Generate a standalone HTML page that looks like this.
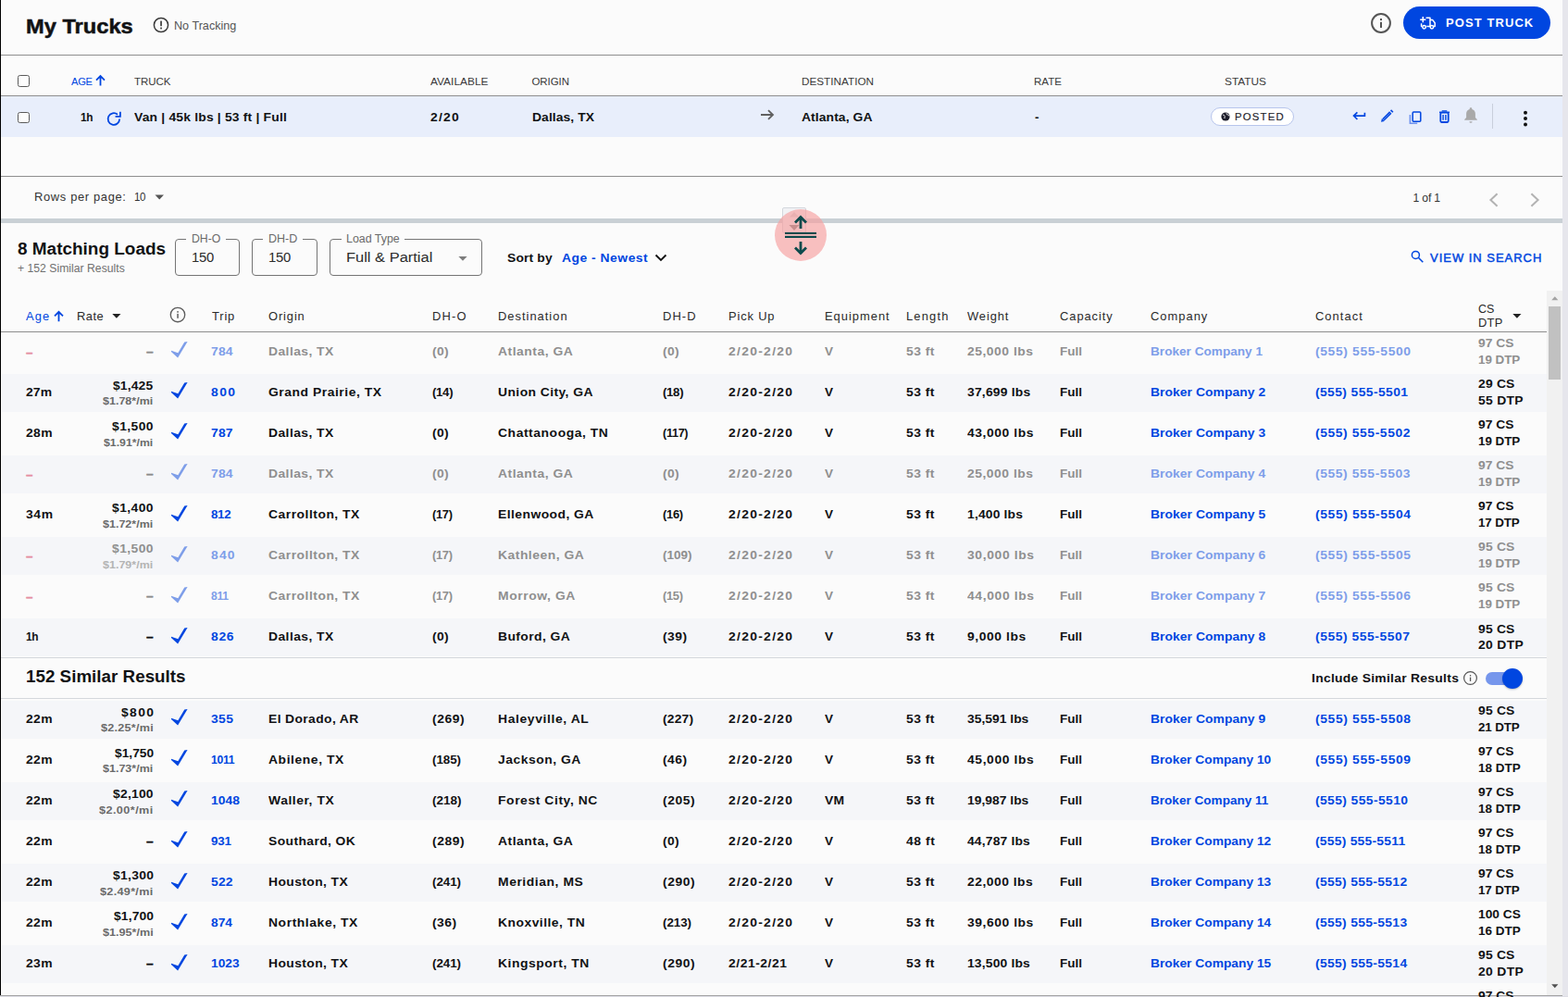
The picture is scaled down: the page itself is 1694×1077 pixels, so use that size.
<!DOCTYPE html>
<html lang="en"><head><meta charset="utf-8"><title>My Trucks</title><style>
html,body{margin:0;padding:0;}
body{width:1694px;height:1077px;overflow:hidden;background:#fbfbfb;font-family:"Liberation Sans",sans-serif;position:relative;}
.t{position:absolute;white-space:pre;transform-origin:0 50%;}
.b{position:absolute;}
svg{overflow:visible;}
</style></head><body>
<div class="b" style="left:0px;top:0px;width:1px;height:1075.5px;background:#000;"></div>
<div class="b" style="left:1688px;top:0px;width:6px;height:1077px;background:#e6e6ec;"></div>
<div class="b" style="left:0px;top:1074.8px;width:1688px;height:1.2px;background:#a3a3a3;"></div>
<div class="b" style="left:0px;top:1076px;width:1694px;height:1px;background:#dedee5;"></div>
<span class="t" style="left:27.9px;top:15px;font-size:22.5px;line-height:27px;color:#111214;transform:scaleX(1.052);font-weight:700;-webkit-text-stroke:0.5px #111214;">My Trucks</span>
<svg class="b" style="left:165px;top:18px;" width="18" height="18" viewBox="0 0 18 18"><circle cx="9" cy="9" r="7.6" fill="none" stroke="#3c3c3c" stroke-width="1.5"/><rect x="8.2" y="4.6" width="1.7" height="5.6" fill="#3c3c3c"/><rect x="8.2" y="11.6" width="1.7" height="1.8" fill="#3c3c3c"/></svg>
<span class="t" style="left:188.0px;top:20px;font-size:12.2px;line-height:16px;color:#555;transform:scaleX(1.036);">No Tracking</span>
<svg class="b" style="left:1479.8px;top:12.7px;" width="24" height="24" viewBox="0 0 24 24"><circle cx="12" cy="12" r="9.9" fill="none" stroke="#555" stroke-width="2"/><rect x="11" y="10.8" width="2" height="6.2" fill="#555"/><rect x="11" y="7" width="2" height="2.1" fill="#555"/></svg>
<div class="b" style="left:1516px;top:7px;width:159px;height:35px;background:#0046e0;border-radius:17.5px;"></div>
<svg class="b" style="left:1533px;top:17px;" width="19" height="16" viewBox="0 0 19 16"><g fill="none" stroke="#fff" stroke-width="1.5" stroke-linejoin="round" stroke-linecap="butt"><path d="M1.2 4.2h6.2M4.3 1.1v6.2"/><path d="M7.6 2.2h4.4v9.4H8.3"/><path d="M12 4.6h2.8l2.4 3.1v3.9h-1.3"/><path d="M2.6 8.2v3.4h0.8"/><circle cx="5.6" cy="12.2" r="1.7"/><circle cx="13.9" cy="12.2" r="1.7"/></g></svg>
<span class="t" style="left:1562.3px;top:17px;font-size:12.5px;line-height:16px;color:#fff;letter-spacing:1.04px;transform:scaleX(1.040);font-weight:700;">POST TRUCK</span>
<div class="b" style="left:1px;top:59px;width:1687px;height:1px;background:#8e8e8e;"></div>
<div class="b" style="left:19px;top:81.3px;width:13px;height:12.5px;box-sizing:border-box;border:1.6px solid #5a5a5a;border-radius:2.5px;background:#fdfdfd;"></div>
<span class="t" style="left:76.5px;top:81px;font-size:11.5px;line-height:14px;color:#0046e0;letter-spacing:-0.30px;transform:scaleX(0.972);">AGE</span>
<svg class="b" style="left:102px;top:80px;" width="13" height="14" viewBox="0 0 13 14"><path d="M6.5 12.6V2.2M2 6.6l4.5-4.5 4.5 4.5" fill="none" stroke="#0046e0" stroke-width="1.8"/></svg>
<span class="t" style="left:145.0px;top:81px;font-size:11.5px;line-height:14px;color:#3a3a3a;letter-spacing:-0.03px;">TRUCK</span>
<span class="t" style="left:465.0px;top:81px;font-size:11.5px;line-height:14px;color:#3a3a3a;transform:scaleX(1.036);">AVAILABLE</span>
<span class="t" style="left:574.5px;top:81px;font-size:11.5px;line-height:14px;color:#3a3a3a;letter-spacing:-0.08px;">ORIGIN</span>
<span class="t" style="left:866.4px;top:81px;font-size:11.5px;line-height:14px;color:#3a3a3a;transform:scaleX(1.020);">DESTINATION</span>
<span class="t" style="left:1117.0px;top:81px;font-size:11.5px;line-height:14px;color:#3a3a3a;transform:scaleX(1.005);">RATE</span>
<span class="t" style="left:1323.3px;top:81px;font-size:11.5px;line-height:14px;color:#3a3a3a;transform:scaleX(1.031);">STATUS</span>
<div class="b" style="left:1px;top:103px;width:1687px;height:1px;background:#8e8e8e;"></div>
<div class="b" style="left:1px;top:104px;width:1687px;height:43.5px;background:#e8eefb;"></div>
<div class="b" style="left:19px;top:120.5px;width:13px;height:12.5px;box-sizing:border-box;border:1.6px solid #5a5a5a;border-radius:2.5px;background:#fdfdfd;"></div>
<span class="t" style="left:86.5px;top:119px;font-size:12.3px;line-height:16px;color:#111214;letter-spacing:-0.30px;transform:scaleX(0.969);font-weight:700;">1h</span>
<svg class="b" style="left:114px;top:120px;" width="18" height="17" viewBox="0 0 18 17"><path d="M15.2 8.6a6.3 6.3 0 1 1-2.2-4.9" fill="none" stroke="#0046e0" stroke-width="1.8"/><path d="M10.6 5.9h5.3V0.8" fill="none" stroke="#0046e0" stroke-width="1.8"/></svg>
<span class="t" style="left:145.0px;top:119px;font-size:12.3px;line-height:16px;color:#111214;letter-spacing:0.16px;transform:scaleX(1.130);font-weight:700;">Van | 45k lbs | 53 ft | Full</span>
<span class="t" style="left:465.0px;top:119px;font-size:12.3px;line-height:16px;color:#111214;letter-spacing:1.11px;transform:scaleX(1.130);font-weight:700;">2/20</span>
<span class="t" style="left:574.5px;top:119px;font-size:12.3px;line-height:16px;color:#111214;letter-spacing:0.06px;transform:scaleX(1.130);font-weight:700;">Dallas, TX</span>
<svg class="b" style="left:821px;top:118px;" width="16" height="12" viewBox="0 0 16 12"><path d="M1 6h13M9 1.2l5 4.8-5 4.8" fill="none" stroke="#606060" stroke-width="1.8"/></svg>
<span class="t" style="left:866.4px;top:119px;font-size:12.3px;line-height:16px;color:#111214;letter-spacing:0.07px;transform:scaleX(1.130);font-weight:700;">Atlanta, GA</span>
<span class="t" style="left:1118.0px;top:119px;font-size:12.3px;line-height:16px;color:#111214;transform:scaleX(1.092);font-weight:700;">-</span>
<div class="b" style="left:1308px;top:116px;width:90px;height:20px;box-sizing:border-box;border:1px solid #b7c5ec;border-radius:10px;background:#fff;"></div>
<svg class="b" style="left:1318.5px;top:121px;" width="10" height="10" viewBox="0 0 10 10"><circle cx="5" cy="5" r="4.6" fill="#1d1d2b"/><path d="M2 3.2c1.2-.2 2 .4 2.2 1.4.2 1-.6 1.4-.2 2.4M6.2 1.2c-.4 1 .2 1.8 1.4 1.8.8 0 1.2.6 1.2 1.4" fill="none" stroke="#fff" stroke-width="0.9"/></svg>
<span class="t" style="left:1333.6px;top:119px;font-size:11px;line-height:14px;color:#1d1d2b;letter-spacing:1.17px;transform:scaleX(1.030);-webkit-text-stroke:0.15px #1d1d2b;">POSTED</span>
<svg class="b" style="left:1460px;top:119px;" width="17" height="12" viewBox="0 0 17 12"><path d="M14.4 2.7V6.1H2.6M6.4 2.3L2.5 6.1L6.4 10" fill="none" stroke="#0046e0" stroke-width="1.7"/></svg>
<svg class="b" style="left:1491px;top:117px;" width="16" height="16" viewBox="0 0 16 16"><path d="M3.4 12.4L11.3 4.5" stroke="#0046e0" stroke-width="3.3" fill="none"/><path d="M12.1 3.7L13.3 2.5" stroke="#0046e0" stroke-width="3.3" fill="none"/><path d="M1 14.8l.9-3.7 2.8 2.8z" fill="#0046e0"/><path d="M3.6 12.2L10.6 5.2" stroke="#6f93ee" stroke-width="0.9" fill="none"/></svg>
<svg class="b" style="left:1522px;top:120px;" width="14" height="15" viewBox="0 0 14 15"><rect x="4.2" y="1" width="8.6" height="10.2" rx="1" fill="none" stroke="#0046e0" stroke-width="1.5"/><path d="M1.4 4v9.2h7.8" fill="none" stroke="#6f93ee" stroke-width="1.6"/></svg>
<svg class="b" style="left:1554px;top:118.6px;" width="13" height="15" viewBox="0 0 13 15"><path d="M1 2.3h11" stroke="#0046e0" stroke-width="1.5"/><path d="M4.4 1.6V0.8h4.2v.8" fill="none" stroke="#0046e0" stroke-width="1.3"/><rect x="2.3" y="2.6" width="8.4" height="10.4" rx="1.2" fill="none" stroke="#0046e0" stroke-width="1.8"/><path d="M5.1 5v5.8M7.9 5v5.8" stroke="#0046e0" stroke-width="1.4"/></svg>
<svg class="b" style="left:1581px;top:115px;" width="16" height="19" viewBox="0 0 16 19"><path d="M8 1.2c.8 0 1.3.5 1.3 1.2v.5c2.3.6 3.6 2.6 3.6 5v4l1.9 2v.9H1.2v-.9l1.9-2v-4c0-2.4 1.3-4.4 3.6-5v-.5c0-.7.5-1.2 1.3-1.2zM6.4 16.2h3.2a1.6 1.6 0 0 1-3.2 0z" fill="#a9a9a9"/></svg>
<div class="b" style="left:1612px;top:112px;width:1px;height:27px;background:#c9cfdc;"></div>
<svg class="b" style="left:1645px;top:119px;" width="6" height="18" viewBox="0 0 6 18"><circle cx="3" cy="2.8" r="2" fill="#111"/><circle cx="3" cy="9.1" r="2" fill="#111"/><circle cx="3" cy="15.6" r="2" fill="#111"/></svg>
<div class="b" style="left:1px;top:189.5px;width:1687px;height:1px;background:#8e8e8e;"></div>
<span class="t" style="left:36.6px;top:205px;font-size:12.2px;line-height:16px;color:#333;letter-spacing:0.61px;transform:scaleX(1.060);">Rows per page:</span>
<span class="t" style="left:145.0px;top:205px;font-size:12.2px;line-height:16px;color:#333;letter-spacing:-0.30px;transform:scaleX(0.944);">10</span>
<svg class="b" style="left:167px;top:209.5px;" width="11" height="6" viewBox="0 0 11 6"><path d="M0.5 0.5h9.5L5.25 5.4z" fill="#555"/></svg>
<span class="t" style="left:1526.6px;top:206px;font-size:12.2px;line-height:16px;color:#333;letter-spacing:-0.20px;">1 of 1</span>
<svg class="b" style="left:1607.5px;top:207.5px;" width="12" height="16" viewBox="0 0 12 16"><path d="M9.6 1.2L2.4 8l7.2 6.8" fill="none" stroke="#b2b2b2" stroke-width="2"/></svg>
<svg class="b" style="left:1651.5px;top:207.5px;" width="12" height="16" viewBox="0 0 12 16"><path d="M2.4 1.2L9.6 8l-7.2 6.8" fill="none" stroke="#b2b2b2" stroke-width="2"/></svg>
<div class="b" style="left:1px;top:235.7px;width:1687px;height:5.1px;background:#c9d0d5;"></div>
<span class="t" style="left:19.3px;top:258px;font-size:17.5px;line-height:22px;color:#111214;transform:scaleX(1.083);font-weight:700;">8 Matching Loads</span>
<span class="t" style="left:19.3px;top:282px;font-size:12px;line-height:16px;color:#707070;transform:scaleX(1.018);">+ 152 Similar Results</span>
<div class="b" style="left:189px;top:258.3px;width:70px;height:39.9px;box-sizing:border-box;border:1px solid #757575;border-radius:4px;"></div>
<div class="b" style="left:201px;top:257.3px;width:43px;height:3px;background:#fbfbfb;"></div>
<span class="t" style="left:206.6px;top:250px;font-size:12px;line-height:16px;color:#6a6a6a;transform:scaleX(1.021);">DH-O</span>
<span class="t" style="left:206.6px;top:268px;font-size:15.5px;line-height:19px;color:#2c2c2c;letter-spacing:-0.30px;transform:scaleX(0.957);">150</span>
<div class="b" style="left:272px;top:258.3px;width:71px;height:39.9px;box-sizing:border-box;border:1px solid #757575;border-radius:4px;"></div>
<div class="b" style="left:284px;top:257.3px;width:43px;height:3px;background:#fbfbfb;"></div>
<span class="t" style="left:290.0px;top:250px;font-size:12px;line-height:16px;color:#6a6a6a;transform:scaleX(1.043);">DH-D</span>
<span class="t" style="left:290.0px;top:268px;font-size:15.5px;line-height:19px;color:#2c2c2c;letter-spacing:-0.30px;transform:scaleX(0.957);">150</span>
<div class="b" style="left:356px;top:258.3px;width:164.5px;height:39.9px;box-sizing:border-box;border:1px solid #757575;border-radius:4px;"></div>
<div class="b" style="left:368.5px;top:257.3px;width:68.5px;height:3px;background:#fbfbfb;"></div>
<span class="t" style="left:373.8px;top:250px;font-size:12px;line-height:16px;color:#6a6a6a;transform:scaleX(1.035);">Load Type</span>
<span class="t" style="left:373.8px;top:268px;font-size:15.5px;line-height:19px;color:#2c2c2c;transform:scaleX(1.062);">Full &amp; Partial</span>
<svg class="b" style="left:495px;top:276.5px;" width="10" height="5" viewBox="0 0 10 5"><path d="M0.4 0h9.2L5 4.8z" fill="#7d7d7d"/></svg>
<span class="t" style="left:548.4px;top:271px;font-size:12.3px;line-height:16px;color:#111214;letter-spacing:0.11px;transform:scaleX(1.130);font-weight:700;">Sort by</span>
<span class="t" style="left:606.6px;top:271px;font-size:12.3px;line-height:16px;color:#0046e0;letter-spacing:0.44px;transform:scaleX(1.130);font-weight:700;">Age - Newest</span>
<svg class="b" style="left:707px;top:273.5px;" width="14" height="9" viewBox="0 0 14 9"><path d="M1.5 1.5L7 7l5.5-5.5" fill="none" stroke="#111" stroke-width="1.8"/></svg>
<svg class="b" style="left:1524px;top:269.8px;" width="15" height="15" viewBox="0 0 15 15"><circle cx="5.4" cy="5.4" r="4" fill="none" stroke="#0046e0" stroke-width="1.5"/><path d="M8.3 8.3l5 5" stroke="#0046e0" stroke-width="1.6"/></svg>
<span class="t" style="left:1545.0px;top:271px;font-size:12.5px;line-height:16px;color:#0046e0;letter-spacing:0.94px;transform:scaleX(1.040);-webkit-text-stroke:0.45px #0046e0;">VIEW IN SEARCH</span>
<span class="t" style="left:28.0px;top:334px;font-size:12.2px;line-height:16px;color:#0046e0;letter-spacing:1.08px;transform:scaleX(1.060);">Age</span>
<svg class="b" style="left:56.5px;top:335px;" width="13" height="13" viewBox="0 0 13 13"><path d="M6.5 12.2V2M2 6.3L6.5 1.8 11 6.3" fill="none" stroke="#0046e0" stroke-width="1.8"/></svg>
<span class="t" style="left:83.0px;top:334px;font-size:12.2px;line-height:16px;color:#2a2a2a;letter-spacing:0.41px;transform:scaleX(1.060);">Rate</span>
<svg class="b" style="left:120.5px;top:339px;" width="10" height="5" viewBox="0 0 10 5"><path d="M0.3 0h9.2L4.9 4.7z" fill="#222"/></svg>
<svg class="b" style="left:183.2px;top:331px;" width="18" height="18" viewBox="0 0 18 18"><circle cx="9" cy="9" r="7.7" fill="none" stroke="#5c5c5c" stroke-width="1.35"/><rect x="8.3" y="7.9" width="1.5" height="4.9" fill="#5c5c5c"/><rect x="8.3" y="5.1" width="1.5" height="1.6" fill="#5c5c5c"/></svg>
<span class="t" style="left:228.6px;top:334px;font-size:12.2px;line-height:16px;color:#2a2a2a;letter-spacing:0.79px;transform:scaleX(1.060);">Trip</span>
<span class="t" style="left:289.6px;top:334px;font-size:12.2px;line-height:16px;color:#2a2a2a;letter-spacing:0.82px;transform:scaleX(1.060);">Origin</span>
<span class="t" style="left:466.6px;top:334px;font-size:12.2px;line-height:16px;color:#2a2a2a;letter-spacing:1.15px;transform:scaleX(1.060);">DH-O</span>
<span class="t" style="left:537.9px;top:334px;font-size:12.2px;line-height:16px;color:#2a2a2a;letter-spacing:0.94px;transform:scaleX(1.060);">Destination</span>
<span class="t" style="left:715.5px;top:334px;font-size:12.2px;line-height:16px;color:#2a2a2a;letter-spacing:1.03px;transform:scaleX(1.060);">DH-D</span>
<span class="t" style="left:786.8px;top:334px;font-size:12.2px;line-height:16px;color:#2a2a2a;letter-spacing:0.79px;transform:scaleX(1.060);">Pick Up</span>
<span class="t" style="left:891.4px;top:334px;font-size:12.2px;line-height:16px;color:#2a2a2a;letter-spacing:0.93px;transform:scaleX(1.060);">Equipment</span>
<span class="t" style="left:979.0px;top:334px;font-size:12.2px;line-height:16px;color:#2a2a2a;letter-spacing:1.10px;transform:scaleX(1.060);">Length</span>
<span class="t" style="left:1045.3px;top:334px;font-size:12.2px;line-height:16px;color:#2a2a2a;letter-spacing:0.83px;transform:scaleX(1.060);">Weight</span>
<span class="t" style="left:1144.5px;top:334px;font-size:12.2px;line-height:16px;color:#2a2a2a;letter-spacing:0.88px;transform:scaleX(1.060);">Capacity</span>
<span class="t" style="left:1243.1px;top:334px;font-size:12.2px;line-height:16px;color:#2a2a2a;letter-spacing:0.94px;transform:scaleX(1.060);">Company</span>
<span class="t" style="left:1420.5px;top:334px;font-size:12.2px;line-height:16px;color:#2a2a2a;letter-spacing:0.98px;transform:scaleX(1.060);">Contact</span>
<span class="t" style="left:1597.4px;top:326px;font-size:12.2px;line-height:16px;color:#2a2a2a;transform:scaleX(1.026);">CS</span>
<span class="t" style="left:1597.4px;top:341px;font-size:12.2px;line-height:16px;color:#2a2a2a;letter-spacing:0.25px;transform:scaleX(1.060);">DTP</span>
<svg class="b" style="left:1633.5px;top:339px;" width="10" height="5" viewBox="0 0 10 5"><path d="M0.3 0h9.2L4.9 4.7z" fill="#222"/></svg>
<div class="b" style="left:1px;top:358px;width:1670px;height:1px;background:#8e8e8e;"></div>
<span class="t" style="left:27.9px;top:373px;font-size:12.3px;line-height:16px;color:#e58fa3;transform:scaleX(1.084);font-weight:700;-webkit-text-stroke:0.4px #e58fa3;">–</span>
<span class="t" style="left:157.7px;top:372px;font-size:12.3px;line-height:16px;color:#8c8c8c;transform:scaleX(1.113);font-weight:700;-webkit-text-stroke:0.4px #8c8c8c;">–</span>
<svg class="b" style="left:184.5px;top:369.2px;" width="18" height="18" viewBox="0 0 18 18"><path d="M0 9.7L7.3 12.2L14.3 0.6L17.6 0L7.1 17.4L0 10.9Z" fill="#7e9ee9"/></svg>
<span class="t" style="left:227.8px;top:372px;font-size:12.3px;line-height:16px;color:#7e9ee9;letter-spacing:0.17px;transform:scaleX(1.130);font-weight:700;">784</span>
<span class="t" style="left:289.5px;top:372px;font-size:12.3px;line-height:16px;color:#8f8f8f;letter-spacing:0.38px;transform:scaleX(1.130);font-weight:700;">Dallas, TX</span>
<span class="t" style="left:466.6px;top:372px;font-size:12.3px;line-height:16px;color:#8f8f8f;letter-spacing:0.28px;transform:scaleX(1.130);font-weight:700;">(0)</span>
<span class="t" style="left:537.9px;top:372px;font-size:12.3px;line-height:16px;color:#8f8f8f;letter-spacing:0.45px;transform:scaleX(1.130);font-weight:700;">Atlanta, GA</span>
<span class="t" style="left:715.5px;top:372px;font-size:12.3px;line-height:16px;color:#8f8f8f;letter-spacing:0.28px;transform:scaleX(1.130);font-weight:700;">(0)</span>
<span class="t" style="left:786.8px;top:372px;font-size:12.3px;line-height:16px;color:#8f8f8f;letter-spacing:1.14px;transform:scaleX(1.130);font-weight:700;">2/20-2/20</span>
<span class="t" style="left:891.4px;top:372px;font-size:12.3px;line-height:16px;color:#8f8f8f;transform:scaleX(1.100);font-weight:700;">V</span>
<span class="t" style="left:979.0px;top:372px;font-size:12.3px;line-height:16px;color:#8f8f8f;letter-spacing:0.41px;transform:scaleX(1.130);font-weight:700;">53 ft</span>
<span class="t" style="left:1045.3px;top:372px;font-size:12.3px;line-height:16px;color:#8f8f8f;letter-spacing:0.45px;transform:scaleX(1.130);font-weight:700;">25,000 lbs</span>
<span class="t" style="left:1144.5px;top:372px;font-size:12.3px;line-height:16px;color:#8f8f8f;transform:scaleX(1.099);font-weight:700;">Full</span>
<span class="t" style="left:1243.1px;top:372px;font-size:12.3px;line-height:16px;color:#7e9ee9;transform:scaleX(1.107);font-weight:700;">Broker Company 1</span>
<span class="t" style="left:1420.5px;top:372px;font-size:12.3px;line-height:16px;color:#7e9ee9;letter-spacing:0.55px;transform:scaleX(1.130);font-weight:700;">(555) 555-5500</span>
<span class="t" style="left:1597.4px;top:363px;font-size:12.3px;line-height:16px;color:#8f8f8f;transform:scaleX(1.123);font-weight:700;">97 CS</span>
<span class="t" style="left:1597.4px;top:381px;font-size:12.3px;line-height:16px;color:#8f8f8f;letter-spacing:-0.03px;transform:scaleX(1.090);font-weight:700;">19 DTP</span>
<div class="b" style="left:2.4px;top:403.5px;width:1668.6px;height:41.1px;background:#f5f6f9;"></div>
<span class="t" style="left:27.6px;top:416px;font-size:12.3px;line-height:16px;color:#111214;letter-spacing:0.09px;transform:scaleX(1.130);font-weight:700;">27m</span>
<span class="t" style="left:122.4px;top:409px;font-size:12.3px;line-height:16px;color:#111214;letter-spacing:0.12px;transform:scaleX(1.130);font-weight:700;">$1,425</span>
<span class="t" style="left:111.4px;top:426px;font-size:11px;line-height:14px;color:#6a6a6a;transform:scaleX(1.137);font-weight:700;">$1.78*/mi</span>
<svg class="b" style="left:184.5px;top:413.3px;" width="18" height="18" viewBox="0 0 18 18"><path d="M0 9.7L7.3 12.2L14.3 0.6L17.6 0L7.1 17.4L0 10.9Z" fill="#0046e0"/></svg>
<span class="t" style="left:227.8px;top:416px;font-size:12.3px;line-height:16px;color:#0046e0;letter-spacing:1.28px;transform:scaleX(1.130);font-weight:700;">800</span>
<span class="t" style="left:289.5px;top:416px;font-size:12.3px;line-height:16px;color:#111214;letter-spacing:0.47px;transform:scaleX(1.130);font-weight:700;">Grand Prairie, TX</span>
<span class="t" style="left:466.6px;top:416px;font-size:12.3px;line-height:16px;color:#111214;letter-spacing:-0.30px;transform:scaleX(1.076);font-weight:700;">(14)</span>
<span class="t" style="left:537.9px;top:416px;font-size:12.3px;line-height:16px;color:#111214;letter-spacing:0.37px;transform:scaleX(1.130);font-weight:700;">Union City, GA</span>
<span class="t" style="left:715.5px;top:416px;font-size:12.3px;line-height:16px;color:#111214;letter-spacing:-0.30px;transform:scaleX(1.076);font-weight:700;">(18)</span>
<span class="t" style="left:786.8px;top:416px;font-size:12.3px;line-height:16px;color:#111214;letter-spacing:1.14px;transform:scaleX(1.130);font-weight:700;">2/20-2/20</span>
<span class="t" style="left:891.4px;top:416px;font-size:12.3px;line-height:16px;color:#111214;transform:scaleX(1.100);font-weight:700;">V</span>
<span class="t" style="left:979.0px;top:416px;font-size:12.3px;line-height:16px;color:#111214;letter-spacing:0.41px;transform:scaleX(1.130);font-weight:700;">53 ft</span>
<span class="t" style="left:1045.3px;top:416px;font-size:12.3px;line-height:16px;color:#111214;letter-spacing:0.18px;transform:scaleX(1.130);font-weight:700;">37,699 lbs</span>
<span class="t" style="left:1144.5px;top:416px;font-size:12.3px;line-height:16px;color:#111214;transform:scaleX(1.099);font-weight:700;">Full</span>
<span class="t" style="left:1243.1px;top:416px;font-size:12.3px;line-height:16px;color:#0046e0;letter-spacing:0.04px;transform:scaleX(1.130);font-weight:700;">Broker Company 2</span>
<span class="t" style="left:1420.5px;top:416px;font-size:12.3px;line-height:16px;color:#0046e0;letter-spacing:0.34px;transform:scaleX(1.130);font-weight:700;">(555) 555-5501</span>
<span class="t" style="left:1597.4px;top:407px;font-size:12.3px;line-height:16px;color:#111214;letter-spacing:0.17px;transform:scaleX(1.130);font-weight:700;">29 CS</span>
<span class="t" style="left:1597.4px;top:425px;font-size:12.3px;line-height:16px;color:#111214;letter-spacing:0.24px;transform:scaleX(1.130);font-weight:700;">55 DTP</span>
<span class="t" style="left:27.6px;top:460px;font-size:12.3px;line-height:16px;color:#111214;letter-spacing:0.35px;transform:scaleX(1.130);font-weight:700;">28m</span>
<span class="t" style="left:121.0px;top:453px;font-size:12.3px;line-height:16px;color:#111214;letter-spacing:0.37px;transform:scaleX(1.130);font-weight:700;">$1,500</span>
<span class="t" style="left:112.4px;top:471px;font-size:11px;line-height:14px;color:#6a6a6a;transform:scaleX(1.116);font-weight:700;">$1.91*/mi</span>
<svg class="b" style="left:184.5px;top:457.4px;" width="18" height="18" viewBox="0 0 18 18"><path d="M0 9.7L7.3 12.2L14.3 0.6L17.6 0L7.1 17.4L0 10.9Z" fill="#0046e0"/></svg>
<span class="t" style="left:227.8px;top:460px;font-size:12.3px;line-height:16px;color:#0046e0;letter-spacing:0.17px;transform:scaleX(1.130);font-weight:700;">787</span>
<span class="t" style="left:289.5px;top:460px;font-size:12.3px;line-height:16px;color:#111214;letter-spacing:0.38px;transform:scaleX(1.130);font-weight:700;">Dallas, TX</span>
<span class="t" style="left:466.6px;top:460px;font-size:12.3px;line-height:16px;color:#111214;letter-spacing:0.28px;transform:scaleX(1.130);font-weight:700;">(0)</span>
<span class="t" style="left:537.9px;top:460px;font-size:12.3px;line-height:16px;color:#111214;letter-spacing:0.49px;transform:scaleX(1.130);font-weight:700;">Chattanooga, TN</span>
<span class="t" style="left:715.5px;top:460px;font-size:12.3px;line-height:16px;color:#111214;letter-spacing:-0.30px;transform:scaleX(1.028);font-weight:700;">(117)</span>
<span class="t" style="left:786.8px;top:460px;font-size:12.3px;line-height:16px;color:#111214;letter-spacing:1.14px;transform:scaleX(1.130);font-weight:700;">2/20-2/20</span>
<span class="t" style="left:891.4px;top:460px;font-size:12.3px;line-height:16px;color:#111214;transform:scaleX(1.100);font-weight:700;">V</span>
<span class="t" style="left:979.0px;top:460px;font-size:12.3px;line-height:16px;color:#111214;letter-spacing:0.41px;transform:scaleX(1.130);font-weight:700;">53 ft</span>
<span class="t" style="left:1045.3px;top:460px;font-size:12.3px;line-height:16px;color:#111214;letter-spacing:0.50px;transform:scaleX(1.130);font-weight:700;">43,000 lbs</span>
<span class="t" style="left:1144.5px;top:460px;font-size:12.3px;line-height:16px;color:#111214;transform:scaleX(1.099);font-weight:700;">Full</span>
<span class="t" style="left:1243.1px;top:460px;font-size:12.3px;line-height:16px;color:#0046e0;letter-spacing:0.04px;transform:scaleX(1.130);font-weight:700;">Broker Company 3</span>
<span class="t" style="left:1420.5px;top:460px;font-size:12.3px;line-height:16px;color:#0046e0;letter-spacing:0.51px;transform:scaleX(1.130);font-weight:700;">(555) 555-5502</span>
<span class="t" style="left:1597.4px;top:451px;font-size:12.3px;line-height:16px;color:#111214;transform:scaleX(1.123);font-weight:700;">97 CS</span>
<span class="t" style="left:1597.4px;top:469px;font-size:12.3px;line-height:16px;color:#111214;letter-spacing:-0.03px;transform:scaleX(1.090);font-weight:700;">19 DTP</span>
<div class="b" style="left:2.4px;top:491.59999999999997px;width:1668.6px;height:41.1px;background:#f5f6f9;"></div>
<span class="t" style="left:27.9px;top:505px;font-size:12.3px;line-height:16px;color:#e58fa3;transform:scaleX(1.084);font-weight:700;-webkit-text-stroke:0.4px #e58fa3;">–</span>
<span class="t" style="left:157.7px;top:504px;font-size:12.3px;line-height:16px;color:#8c8c8c;transform:scaleX(1.113);font-weight:700;-webkit-text-stroke:0.4px #8c8c8c;">–</span>
<svg class="b" style="left:184.5px;top:501.4px;" width="18" height="18" viewBox="0 0 18 18"><path d="M0 9.7L7.3 12.2L14.3 0.6L17.6 0L7.1 17.4L0 10.9Z" fill="#7e9ee9"/></svg>
<span class="t" style="left:227.8px;top:504px;font-size:12.3px;line-height:16px;color:#7e9ee9;letter-spacing:0.17px;transform:scaleX(1.130);font-weight:700;">784</span>
<span class="t" style="left:289.5px;top:504px;font-size:12.3px;line-height:16px;color:#8f8f8f;letter-spacing:0.38px;transform:scaleX(1.130);font-weight:700;">Dallas, TX</span>
<span class="t" style="left:466.6px;top:504px;font-size:12.3px;line-height:16px;color:#8f8f8f;letter-spacing:0.28px;transform:scaleX(1.130);font-weight:700;">(0)</span>
<span class="t" style="left:537.9px;top:504px;font-size:12.3px;line-height:16px;color:#8f8f8f;letter-spacing:0.45px;transform:scaleX(1.130);font-weight:700;">Atlanta, GA</span>
<span class="t" style="left:715.5px;top:504px;font-size:12.3px;line-height:16px;color:#8f8f8f;letter-spacing:0.28px;transform:scaleX(1.130);font-weight:700;">(0)</span>
<span class="t" style="left:786.8px;top:504px;font-size:12.3px;line-height:16px;color:#8f8f8f;letter-spacing:1.14px;transform:scaleX(1.130);font-weight:700;">2/20-2/20</span>
<span class="t" style="left:891.4px;top:504px;font-size:12.3px;line-height:16px;color:#8f8f8f;transform:scaleX(1.100);font-weight:700;">V</span>
<span class="t" style="left:979.0px;top:504px;font-size:12.3px;line-height:16px;color:#8f8f8f;letter-spacing:0.41px;transform:scaleX(1.130);font-weight:700;">53 ft</span>
<span class="t" style="left:1045.3px;top:504px;font-size:12.3px;line-height:16px;color:#8f8f8f;letter-spacing:0.45px;transform:scaleX(1.130);font-weight:700;">25,000 lbs</span>
<span class="t" style="left:1144.5px;top:504px;font-size:12.3px;line-height:16px;color:#8f8f8f;transform:scaleX(1.099);font-weight:700;">Full</span>
<span class="t" style="left:1243.1px;top:504px;font-size:12.3px;line-height:16px;color:#7e9ee9;letter-spacing:0.04px;transform:scaleX(1.130);font-weight:700;">Broker Company 4</span>
<span class="t" style="left:1420.5px;top:504px;font-size:12.3px;line-height:16px;color:#7e9ee9;letter-spacing:0.51px;transform:scaleX(1.130);font-weight:700;">(555) 555-5503</span>
<span class="t" style="left:1597.4px;top:495px;font-size:12.3px;line-height:16px;color:#8f8f8f;transform:scaleX(1.123);font-weight:700;">97 CS</span>
<span class="t" style="left:1597.4px;top:513px;font-size:12.3px;line-height:16px;color:#8f8f8f;letter-spacing:-0.03px;transform:scaleX(1.090);font-weight:700;">19 DTP</span>
<span class="t" style="left:27.6px;top:548px;font-size:12.3px;line-height:16px;color:#111214;letter-spacing:0.53px;transform:scaleX(1.130);font-weight:700;">34m</span>
<span class="t" style="left:121.0px;top:541px;font-size:12.3px;line-height:16px;color:#111214;letter-spacing:0.37px;transform:scaleX(1.130);font-weight:700;">$1,400</span>
<span class="t" style="left:111.4px;top:559px;font-size:11px;line-height:14px;color:#6a6a6a;transform:scaleX(1.137);font-weight:700;">$1.72*/mi</span>
<svg class="b" style="left:184.5px;top:545.5px;" width="18" height="18" viewBox="0 0 18 18"><path d="M0 9.7L7.3 12.2L14.3 0.6L17.6 0L7.1 17.4L0 10.9Z" fill="#0046e0"/></svg>
<span class="t" style="left:227.8px;top:548px;font-size:12.3px;line-height:16px;color:#0046e0;letter-spacing:-0.30px;transform:scaleX(1.083);font-weight:700;">812</span>
<span class="t" style="left:289.5px;top:548px;font-size:12.3px;line-height:16px;color:#111214;letter-spacing:0.44px;transform:scaleX(1.130);font-weight:700;">Carrollton, TX</span>
<span class="t" style="left:466.6px;top:548px;font-size:12.3px;line-height:16px;color:#111214;letter-spacing:-0.30px;transform:scaleX(1.048);font-weight:700;">(17)</span>
<span class="t" style="left:537.9px;top:548px;font-size:12.3px;line-height:16px;color:#111214;letter-spacing:0.39px;transform:scaleX(1.130);font-weight:700;">Ellenwood, GA</span>
<span class="t" style="left:715.5px;top:548px;font-size:12.3px;line-height:16px;color:#111214;letter-spacing:-0.30px;transform:scaleX(1.053);font-weight:700;">(16)</span>
<span class="t" style="left:786.8px;top:548px;font-size:12.3px;line-height:16px;color:#111214;letter-spacing:1.14px;transform:scaleX(1.130);font-weight:700;">2/20-2/20</span>
<span class="t" style="left:891.4px;top:548px;font-size:12.3px;line-height:16px;color:#111214;transform:scaleX(1.100);font-weight:700;">V</span>
<span class="t" style="left:979.0px;top:548px;font-size:12.3px;line-height:16px;color:#111214;letter-spacing:0.41px;transform:scaleX(1.130);font-weight:700;">53 ft</span>
<span class="t" style="left:1045.3px;top:548px;font-size:12.3px;line-height:16px;color:#111214;letter-spacing:0.14px;transform:scaleX(1.130);font-weight:700;">1,400 lbs</span>
<span class="t" style="left:1144.5px;top:548px;font-size:12.3px;line-height:16px;color:#111214;transform:scaleX(1.099);font-weight:700;">Full</span>
<span class="t" style="left:1243.1px;top:548px;font-size:12.3px;line-height:16px;color:#0046e0;letter-spacing:0.04px;transform:scaleX(1.130);font-weight:700;">Broker Company 5</span>
<span class="t" style="left:1420.5px;top:548px;font-size:12.3px;line-height:16px;color:#0046e0;letter-spacing:0.54px;transform:scaleX(1.130);font-weight:700;">(555) 555-5504</span>
<span class="t" style="left:1597.4px;top:539px;font-size:12.3px;line-height:16px;color:#111214;transform:scaleX(1.123);font-weight:700;">97 CS</span>
<span class="t" style="left:1597.4px;top:557px;font-size:12.3px;line-height:16px;color:#111214;letter-spacing:-0.12px;transform:scaleX(1.090);font-weight:700;">17 DTP</span>
<div class="b" style="left:2.4px;top:579.8000000000001px;width:1668.6px;height:41.1px;background:#f5f6f9;"></div>
<span class="t" style="left:27.9px;top:593px;font-size:12.3px;line-height:16px;color:#e58fa3;transform:scaleX(1.084);font-weight:700;-webkit-text-stroke:0.4px #e58fa3;">–</span>
<span class="t" style="left:121.0px;top:585px;font-size:12.3px;line-height:16px;color:#8f8f8f;letter-spacing:0.37px;transform:scaleX(1.130);font-weight:700;">$1,500</span>
<span class="t" style="left:111.4px;top:603px;font-size:11px;line-height:14px;color:#b4b4b4;transform:scaleX(1.137);font-weight:700;">$1.79*/mi</span>
<svg class="b" style="left:184.5px;top:589.6px;" width="18" height="18" viewBox="0 0 18 18"><path d="M0 9.7L7.3 12.2L14.3 0.6L17.6 0L7.1 17.4L0 10.9Z" fill="#7e9ee9"/></svg>
<span class="t" style="left:227.8px;top:592px;font-size:12.3px;line-height:16px;color:#7e9ee9;letter-spacing:1.06px;transform:scaleX(1.130);font-weight:700;">840</span>
<span class="t" style="left:289.5px;top:592px;font-size:12.3px;line-height:16px;color:#8f8f8f;letter-spacing:0.44px;transform:scaleX(1.130);font-weight:700;">Carrollton, TX</span>
<span class="t" style="left:466.6px;top:592px;font-size:12.3px;line-height:16px;color:#8f8f8f;letter-spacing:-0.30px;transform:scaleX(1.048);font-weight:700;">(17)</span>
<span class="t" style="left:537.9px;top:592px;font-size:12.3px;line-height:16px;color:#8f8f8f;letter-spacing:0.44px;transform:scaleX(1.130);font-weight:700;">Kathleen, GA</span>
<span class="t" style="left:715.5px;top:592px;font-size:12.3px;line-height:16px;color:#8f8f8f;transform:scaleX(1.100);font-weight:700;">(109)</span>
<span class="t" style="left:786.8px;top:592px;font-size:12.3px;line-height:16px;color:#8f8f8f;letter-spacing:1.14px;transform:scaleX(1.130);font-weight:700;">2/20-2/20</span>
<span class="t" style="left:891.4px;top:592px;font-size:12.3px;line-height:16px;color:#8f8f8f;transform:scaleX(1.100);font-weight:700;">V</span>
<span class="t" style="left:979.0px;top:592px;font-size:12.3px;line-height:16px;color:#8f8f8f;letter-spacing:0.41px;transform:scaleX(1.130);font-weight:700;">53 ft</span>
<span class="t" style="left:1045.3px;top:592px;font-size:12.3px;line-height:16px;color:#8f8f8f;letter-spacing:0.55px;transform:scaleX(1.130);font-weight:700;">30,000 lbs</span>
<span class="t" style="left:1144.5px;top:592px;font-size:12.3px;line-height:16px;color:#8f8f8f;transform:scaleX(1.099);font-weight:700;">Full</span>
<span class="t" style="left:1243.1px;top:592px;font-size:12.3px;line-height:16px;color:#7e9ee9;letter-spacing:0.04px;transform:scaleX(1.130);font-weight:700;">Broker Company 6</span>
<span class="t" style="left:1420.5px;top:592px;font-size:12.3px;line-height:16px;color:#7e9ee9;letter-spacing:0.54px;transform:scaleX(1.130);font-weight:700;">(555) 555-5505</span>
<span class="t" style="left:1597.4px;top:583px;font-size:12.3px;line-height:16px;color:#8f8f8f;letter-spacing:0.17px;transform:scaleX(1.130);font-weight:700;">95 CS</span>
<span class="t" style="left:1597.4px;top:601px;font-size:12.3px;line-height:16px;color:#8f8f8f;letter-spacing:-0.03px;transform:scaleX(1.090);font-weight:700;">19 DTP</span>
<span class="t" style="left:27.9px;top:637px;font-size:12.3px;line-height:16px;color:#e58fa3;transform:scaleX(1.084);font-weight:700;-webkit-text-stroke:0.4px #e58fa3;">–</span>
<span class="t" style="left:157.7px;top:636px;font-size:12.3px;line-height:16px;color:#8c8c8c;transform:scaleX(1.113);font-weight:700;-webkit-text-stroke:0.4px #8c8c8c;">–</span>
<svg class="b" style="left:184.5px;top:633.6px;" width="18" height="18" viewBox="0 0 18 18"><path d="M0 9.7L7.3 12.2L14.3 0.6L17.6 0L7.1 17.4L0 10.9Z" fill="#7e9ee9"/></svg>
<span class="t" style="left:227.8px;top:636px;font-size:12.3px;line-height:16px;color:#7e9ee9;letter-spacing:-0.30px;transform:scaleX(0.986);font-weight:700;">811</span>
<span class="t" style="left:289.5px;top:636px;font-size:12.3px;line-height:16px;color:#8f8f8f;letter-spacing:0.44px;transform:scaleX(1.130);font-weight:700;">Carrollton, TX</span>
<span class="t" style="left:466.6px;top:636px;font-size:12.3px;line-height:16px;color:#8f8f8f;letter-spacing:-0.30px;transform:scaleX(1.048);font-weight:700;">(17)</span>
<span class="t" style="left:537.9px;top:636px;font-size:12.3px;line-height:16px;color:#8f8f8f;letter-spacing:0.50px;transform:scaleX(1.130);font-weight:700;">Morrow, GA</span>
<span class="t" style="left:715.5px;top:636px;font-size:12.3px;line-height:16px;color:#8f8f8f;letter-spacing:-0.30px;transform:scaleX(1.048);font-weight:700;">(15)</span>
<span class="t" style="left:786.8px;top:636px;font-size:12.3px;line-height:16px;color:#8f8f8f;letter-spacing:1.14px;transform:scaleX(1.130);font-weight:700;">2/20-2/20</span>
<span class="t" style="left:891.4px;top:636px;font-size:12.3px;line-height:16px;color:#8f8f8f;transform:scaleX(1.100);font-weight:700;">V</span>
<span class="t" style="left:979.0px;top:636px;font-size:12.3px;line-height:16px;color:#8f8f8f;letter-spacing:0.41px;transform:scaleX(1.130);font-weight:700;">53 ft</span>
<span class="t" style="left:1045.3px;top:636px;font-size:12.3px;line-height:16px;color:#8f8f8f;letter-spacing:0.55px;transform:scaleX(1.130);font-weight:700;">44,000 lbs</span>
<span class="t" style="left:1144.5px;top:636px;font-size:12.3px;line-height:16px;color:#8f8f8f;transform:scaleX(1.099);font-weight:700;">Full</span>
<span class="t" style="left:1243.1px;top:636px;font-size:12.3px;line-height:16px;color:#7e9ee9;letter-spacing:0.04px;transform:scaleX(1.130);font-weight:700;">Broker Company 7</span>
<span class="t" style="left:1420.5px;top:636px;font-size:12.3px;line-height:16px;color:#7e9ee9;letter-spacing:0.54px;transform:scaleX(1.130);font-weight:700;">(555) 555-5506</span>
<span class="t" style="left:1597.4px;top:627px;font-size:12.3px;line-height:16px;color:#8f8f8f;letter-spacing:0.17px;transform:scaleX(1.130);font-weight:700;">95 CS</span>
<span class="t" style="left:1597.4px;top:645px;font-size:12.3px;line-height:16px;color:#8f8f8f;letter-spacing:-0.03px;transform:scaleX(1.090);font-weight:700;">19 DTP</span>
<div class="b" style="left:2.4px;top:667.9000000000001px;width:1668.6px;height:41.1px;background:#f5f6f9;"></div>
<span class="t" style="left:27.6px;top:680px;font-size:12.3px;line-height:16px;color:#111214;letter-spacing:-0.30px;transform:scaleX(0.969);font-weight:700;">1h</span>
<span class="t" style="left:157.7px;top:680px;font-size:12.3px;line-height:16px;color:#111214;transform:scaleX(1.113);font-weight:700;-webkit-text-stroke:0.4px #111214;">–</span>
<svg class="b" style="left:184.5px;top:677.7px;" width="18" height="18" viewBox="0 0 18 18"><path d="M0 9.7L7.3 12.2L14.3 0.6L17.6 0L7.1 17.4L0 10.9Z" fill="#0046e0"/></svg>
<span class="t" style="left:227.8px;top:680px;font-size:12.3px;line-height:16px;color:#0046e0;letter-spacing:0.61px;transform:scaleX(1.130);font-weight:700;">826</span>
<span class="t" style="left:289.5px;top:680px;font-size:12.3px;line-height:16px;color:#111214;letter-spacing:0.38px;transform:scaleX(1.130);font-weight:700;">Dallas, TX</span>
<span class="t" style="left:466.6px;top:680px;font-size:12.3px;line-height:16px;color:#111214;letter-spacing:0.28px;transform:scaleX(1.130);font-weight:700;">(0)</span>
<span class="t" style="left:537.9px;top:680px;font-size:12.3px;line-height:16px;color:#111214;letter-spacing:0.36px;transform:scaleX(1.130);font-weight:700;">Buford, GA</span>
<span class="t" style="left:715.5px;top:680px;font-size:12.3px;line-height:16px;color:#111214;letter-spacing:0.40px;transform:scaleX(1.130);font-weight:700;">(39)</span>
<span class="t" style="left:786.8px;top:680px;font-size:12.3px;line-height:16px;color:#111214;letter-spacing:1.14px;transform:scaleX(1.130);font-weight:700;">2/20-2/20</span>
<span class="t" style="left:891.4px;top:680px;font-size:12.3px;line-height:16px;color:#111214;transform:scaleX(1.100);font-weight:700;">V</span>
<span class="t" style="left:979.0px;top:680px;font-size:12.3px;line-height:16px;color:#111214;letter-spacing:0.41px;transform:scaleX(1.130);font-weight:700;">53 ft</span>
<span class="t" style="left:1045.3px;top:680px;font-size:12.3px;line-height:16px;color:#111214;letter-spacing:0.51px;transform:scaleX(1.130);font-weight:700;">9,000 lbs</span>
<span class="t" style="left:1144.5px;top:680px;font-size:12.3px;line-height:16px;color:#111214;transform:scaleX(1.099);font-weight:700;">Full</span>
<span class="t" style="left:1243.1px;top:680px;font-size:12.3px;line-height:16px;color:#0046e0;letter-spacing:0.04px;transform:scaleX(1.130);font-weight:700;">Broker Company 8</span>
<span class="t" style="left:1420.5px;top:680px;font-size:12.3px;line-height:16px;color:#0046e0;letter-spacing:0.48px;transform:scaleX(1.130);font-weight:700;">(555) 555-5507</span>
<span class="t" style="left:1597.4px;top:672px;font-size:12.3px;line-height:16px;color:#111214;letter-spacing:0.17px;transform:scaleX(1.130);font-weight:700;">95 CS</span>
<span class="t" style="left:1597.4px;top:689px;font-size:12.3px;line-height:16px;color:#111214;letter-spacing:0.30px;transform:scaleX(1.130);font-weight:700;">20 DTP</span>
<div class="b" style="left:1px;top:710px;width:1670px;height:1px;background:#d4d7dc;"></div>
<div class="b" style="left:1px;top:754px;width:1670px;height:1px;background:#d4d7dc;"></div>
<span class="t" style="left:27.6px;top:720px;font-size:17.5px;line-height:22px;color:#111214;transform:scaleX(1.075);font-weight:700;">152 Similar Results</span>
<span class="t" style="left:1416.8px;top:725px;font-size:12.3px;line-height:16px;color:#111214;letter-spacing:0.24px;transform:scaleX(1.130);font-weight:700;">Include Similar Results</span>
<svg class="b" style="left:1580px;top:724px;" width="17" height="17" viewBox="0 0 17 17"><circle cx="8.5" cy="8.5" r="6.9" fill="none" stroke="#555" stroke-width="1.2"/><rect x="7.9" y="7.6" width="1.3" height="4.3" fill="#555"/><rect x="7.9" y="5" width="1.3" height="1.4" fill="#555"/></svg>
<div class="b" style="left:1605px;top:725.7px;width:37px;height:14px;background:#7696ec;border-radius:7px;"></div>
<div class="b" style="left:1622.7px;top:721.8px;width:22px;height:22px;background:#0046e0;border-radius:11px;box-shadow:0 1px 2px rgba(0,0,0,.25);"></div>
<div class="b" style="left:2.4px;top:756.5px;width:1668.6px;height:41.1px;background:#f5f6f9;"></div>
<span class="t" style="left:27.6px;top:769px;font-size:12.3px;line-height:16px;color:#111214;letter-spacing:0.35px;transform:scaleX(1.130);font-weight:700;">22m</span>
<span class="t" style="left:130.5px;top:762px;font-size:12.3px;line-height:16px;color:#111214;letter-spacing:1.23px;transform:scaleX(1.130);font-weight:700;">$800</span>
<span class="t" style="left:108.9px;top:779px;font-size:11px;line-height:14px;color:#6a6a6a;letter-spacing:0.20px;transform:scaleX(1.150);font-weight:700;">$2.25*/mi</span>
<svg class="b" style="left:184.5px;top:766.3px;" width="18" height="18" viewBox="0 0 18 18"><path d="M0 9.7L7.3 12.2L14.3 0.6L17.6 0L7.1 17.4L0 10.9Z" fill="#0046e0"/></svg>
<span class="t" style="left:227.8px;top:769px;font-size:12.3px;line-height:16px;color:#0046e0;letter-spacing:0.35px;transform:scaleX(1.130);font-weight:700;">355</span>
<span class="t" style="left:289.5px;top:769px;font-size:12.3px;line-height:16px;color:#111214;letter-spacing:0.32px;transform:scaleX(1.130);font-weight:700;">El Dorado, AR</span>
<span class="t" style="left:466.6px;top:769px;font-size:12.3px;line-height:16px;color:#111214;letter-spacing:0.47px;transform:scaleX(1.130);font-weight:700;">(269)</span>
<span class="t" style="left:537.9px;top:769px;font-size:12.3px;line-height:16px;color:#111214;letter-spacing:0.54px;transform:scaleX(1.130);font-weight:700;">Haleyville, AL</span>
<span class="t" style="left:715.5px;top:769px;font-size:12.3px;line-height:16px;color:#111214;letter-spacing:0.14px;transform:scaleX(1.130);font-weight:700;">(227)</span>
<span class="t" style="left:786.8px;top:769px;font-size:12.3px;line-height:16px;color:#111214;letter-spacing:1.14px;transform:scaleX(1.130);font-weight:700;">2/20-2/20</span>
<span class="t" style="left:891.4px;top:769px;font-size:12.3px;line-height:16px;color:#111214;transform:scaleX(1.100);font-weight:700;">V</span>
<span class="t" style="left:979.0px;top:769px;font-size:12.3px;line-height:16px;color:#111214;letter-spacing:0.41px;transform:scaleX(1.130);font-weight:700;">53 ft</span>
<span class="t" style="left:1045.3px;top:769px;font-size:12.3px;line-height:16px;color:#111214;transform:scaleX(1.128);font-weight:700;">35,591 lbs</span>
<span class="t" style="left:1144.5px;top:769px;font-size:12.3px;line-height:16px;color:#111214;transform:scaleX(1.099);font-weight:700;">Full</span>
<span class="t" style="left:1243.1px;top:769px;font-size:12.3px;line-height:16px;color:#0046e0;letter-spacing:0.04px;transform:scaleX(1.130);font-weight:700;">Broker Company 9</span>
<span class="t" style="left:1420.5px;top:769px;font-size:12.3px;line-height:16px;color:#0046e0;letter-spacing:0.55px;transform:scaleX(1.130);font-weight:700;">(555) 555-5508</span>
<span class="t" style="left:1597.4px;top:760px;font-size:12.3px;line-height:16px;color:#111214;letter-spacing:0.17px;transform:scaleX(1.130);font-weight:700;">95 CS</span>
<span class="t" style="left:1597.4px;top:778px;font-size:12.3px;line-height:16px;color:#111214;letter-spacing:-0.12px;transform:scaleX(1.090);font-weight:700;">21 DTP</span>
<span class="t" style="left:27.6px;top:813px;font-size:12.3px;line-height:16px;color:#111214;letter-spacing:0.35px;transform:scaleX(1.130);font-weight:700;">22m</span>
<span class="t" style="left:123.5px;top:806px;font-size:12.3px;line-height:16px;color:#111214;transform:scaleX(1.119);font-weight:700;">$1,750</span>
<span class="t" style="left:111.4px;top:823px;font-size:11px;line-height:14px;color:#6a6a6a;transform:scaleX(1.137);font-weight:700;">$1.73*/mi</span>
<svg class="b" style="left:184.5px;top:810.3px;" width="18" height="18" viewBox="0 0 18 18"><path d="M0 9.7L7.3 12.2L14.3 0.6L17.6 0L7.1 17.4L0 10.9Z" fill="#0046e0"/></svg>
<span class="t" style="left:227.8px;top:813px;font-size:12.3px;line-height:16px;color:#0046e0;letter-spacing:-0.30px;transform:scaleX(0.993);font-weight:700;">1011</span>
<span class="t" style="left:289.5px;top:813px;font-size:12.3px;line-height:16px;color:#111214;letter-spacing:0.50px;transform:scaleX(1.130);font-weight:700;">Abilene, TX</span>
<span class="t" style="left:466.6px;top:813px;font-size:12.3px;line-height:16px;color:#111214;letter-spacing:-0.05px;transform:scaleX(1.090);font-weight:700;">(185)</span>
<span class="t" style="left:537.9px;top:813px;font-size:12.3px;line-height:16px;color:#111214;letter-spacing:0.45px;transform:scaleX(1.130);font-weight:700;">Jackson, GA</span>
<span class="t" style="left:715.5px;top:813px;font-size:12.3px;line-height:16px;color:#111214;letter-spacing:0.40px;transform:scaleX(1.130);font-weight:700;">(46)</span>
<span class="t" style="left:786.8px;top:813px;font-size:12.3px;line-height:16px;color:#111214;letter-spacing:1.14px;transform:scaleX(1.130);font-weight:700;">2/20-2/20</span>
<span class="t" style="left:891.4px;top:813px;font-size:12.3px;line-height:16px;color:#111214;transform:scaleX(1.100);font-weight:700;">V</span>
<span class="t" style="left:979.0px;top:813px;font-size:12.3px;line-height:16px;color:#111214;letter-spacing:0.41px;transform:scaleX(1.130);font-weight:700;">53 ft</span>
<span class="t" style="left:1045.3px;top:813px;font-size:12.3px;line-height:16px;color:#111214;letter-spacing:0.52px;transform:scaleX(1.130);font-weight:700;">45,000 lbs</span>
<span class="t" style="left:1144.5px;top:813px;font-size:12.3px;line-height:16px;color:#111214;transform:scaleX(1.099);font-weight:700;">Full</span>
<span class="t" style="left:1243.1px;top:813px;font-size:12.3px;line-height:16px;color:#0046e0;transform:scaleX(1.121);font-weight:700;">Broker Company 10</span>
<span class="t" style="left:1420.5px;top:813px;font-size:12.3px;line-height:16px;color:#0046e0;letter-spacing:0.55px;transform:scaleX(1.130);font-weight:700;">(555) 555-5509</span>
<span class="t" style="left:1597.4px;top:804px;font-size:12.3px;line-height:16px;color:#111214;transform:scaleX(1.123);font-weight:700;">97 CS</span>
<span class="t" style="left:1597.4px;top:822px;font-size:12.3px;line-height:16px;color:#111214;transform:scaleX(1.098);font-weight:700;">18 DTP</span>
<div class="b" style="left:2.4px;top:844.6px;width:1668.6px;height:41.1px;background:#f5f6f9;"></div>
<span class="t" style="left:27.6px;top:857px;font-size:12.3px;line-height:16px;color:#111214;letter-spacing:0.35px;transform:scaleX(1.130);font-weight:700;">22m</span>
<span class="t" style="left:122.0px;top:850px;font-size:12.3px;line-height:16px;color:#111214;letter-spacing:0.19px;transform:scaleX(1.130);font-weight:700;">$2,100</span>
<span class="t" style="left:107.4px;top:868px;font-size:11px;line-height:14px;color:#6a6a6a;letter-spacing:0.37px;transform:scaleX(1.150);font-weight:700;">$2.00*/mi</span>
<svg class="b" style="left:184.5px;top:854.4px;" width="18" height="18" viewBox="0 0 18 18"><path d="M0 9.7L7.3 12.2L14.3 0.6L17.6 0L7.1 17.4L0 10.9Z" fill="#0046e0"/></svg>
<span class="t" style="left:227.8px;top:857px;font-size:12.3px;line-height:16px;color:#0046e0;letter-spacing:0.05px;transform:scaleX(1.130);font-weight:700;">1048</span>
<span class="t" style="left:289.5px;top:857px;font-size:12.3px;line-height:16px;color:#111214;letter-spacing:0.47px;transform:scaleX(1.130);font-weight:700;">Waller, TX</span>
<span class="t" style="left:466.6px;top:857px;font-size:12.3px;line-height:16px;color:#111214;transform:scaleX(1.100);font-weight:700;">(218)</span>
<span class="t" style="left:537.9px;top:857px;font-size:12.3px;line-height:16px;color:#111214;letter-spacing:0.51px;transform:scaleX(1.130);font-weight:700;">Forest City, NC</span>
<span class="t" style="left:715.5px;top:857px;font-size:12.3px;line-height:16px;color:#111214;letter-spacing:0.47px;transform:scaleX(1.130);font-weight:700;">(205)</span>
<span class="t" style="left:786.8px;top:857px;font-size:12.3px;line-height:16px;color:#111214;letter-spacing:1.14px;transform:scaleX(1.130);font-weight:700;">2/20-2/20</span>
<span class="t" style="left:891.4px;top:857px;font-size:12.3px;line-height:16px;color:#111214;letter-spacing:0.13px;transform:scaleX(1.130);font-weight:700;">VM</span>
<span class="t" style="left:979.0px;top:857px;font-size:12.3px;line-height:16px;color:#111214;letter-spacing:0.41px;transform:scaleX(1.130);font-weight:700;">53 ft</span>
<span class="t" style="left:1045.3px;top:857px;font-size:12.3px;line-height:16px;color:#111214;transform:scaleX(1.128);font-weight:700;">19,987 lbs</span>
<span class="t" style="left:1144.5px;top:857px;font-size:12.3px;line-height:16px;color:#111214;transform:scaleX(1.099);font-weight:700;">Full</span>
<span class="t" style="left:1243.1px;top:857px;font-size:12.3px;line-height:16px;color:#0046e0;transform:scaleX(1.103);font-weight:700;">Broker Company 11</span>
<span class="t" style="left:1420.5px;top:857px;font-size:12.3px;line-height:16px;color:#0046e0;letter-spacing:0.34px;transform:scaleX(1.130);font-weight:700;">(555) 555-5510</span>
<span class="t" style="left:1597.4px;top:848px;font-size:12.3px;line-height:16px;color:#111214;transform:scaleX(1.123);font-weight:700;">97 CS</span>
<span class="t" style="left:1597.4px;top:866px;font-size:12.3px;line-height:16px;color:#111214;transform:scaleX(1.098);font-weight:700;">18 DTP</span>
<span class="t" style="left:27.6px;top:901px;font-size:12.3px;line-height:16px;color:#111214;letter-spacing:0.35px;transform:scaleX(1.130);font-weight:700;">22m</span>
<span class="t" style="left:157.7px;top:901px;font-size:12.3px;line-height:16px;color:#111214;transform:scaleX(1.113);font-weight:700;-webkit-text-stroke:0.4px #111214;">–</span>
<svg class="b" style="left:184.5px;top:898.4px;" width="18" height="18" viewBox="0 0 18 18"><path d="M0 9.7L7.3 12.2L14.3 0.6L17.6 0L7.1 17.4L0 10.9Z" fill="#0046e0"/></svg>
<span class="t" style="left:227.8px;top:901px;font-size:12.3px;line-height:16px;color:#0046e0;letter-spacing:-0.18px;transform:scaleX(1.090);font-weight:700;">931</span>
<span class="t" style="left:289.5px;top:901px;font-size:12.3px;line-height:16px;color:#111214;letter-spacing:0.34px;transform:scaleX(1.130);font-weight:700;">Southard, OK</span>
<span class="t" style="left:466.6px;top:901px;font-size:12.3px;line-height:16px;color:#111214;letter-spacing:0.47px;transform:scaleX(1.130);font-weight:700;">(289)</span>
<span class="t" style="left:537.9px;top:901px;font-size:12.3px;line-height:16px;color:#111214;letter-spacing:0.45px;transform:scaleX(1.130);font-weight:700;">Atlanta, GA</span>
<span class="t" style="left:715.5px;top:901px;font-size:12.3px;line-height:16px;color:#111214;letter-spacing:0.28px;transform:scaleX(1.130);font-weight:700;">(0)</span>
<span class="t" style="left:786.8px;top:901px;font-size:12.3px;line-height:16px;color:#111214;letter-spacing:1.14px;transform:scaleX(1.130);font-weight:700;">2/20-2/20</span>
<span class="t" style="left:891.4px;top:901px;font-size:12.3px;line-height:16px;color:#111214;transform:scaleX(1.100);font-weight:700;">V</span>
<span class="t" style="left:979.0px;top:901px;font-size:12.3px;line-height:16px;color:#111214;letter-spacing:0.52px;transform:scaleX(1.130);font-weight:700;">48 ft</span>
<span class="t" style="left:1045.3px;top:901px;font-size:12.3px;line-height:16px;color:#111214;letter-spacing:0.13px;transform:scaleX(1.130);font-weight:700;">44,787 lbs</span>
<span class="t" style="left:1144.5px;top:901px;font-size:12.3px;line-height:16px;color:#111214;transform:scaleX(1.099);font-weight:700;">Full</span>
<span class="t" style="left:1243.1px;top:901px;font-size:12.3px;line-height:16px;color:#0046e0;transform:scaleX(1.121);font-weight:700;">Broker Company 12</span>
<span class="t" style="left:1420.5px;top:901px;font-size:12.3px;line-height:16px;color:#0046e0;letter-spacing:0.20px;transform:scaleX(1.130);font-weight:700;">(555) 555-5511</span>
<span class="t" style="left:1597.4px;top:892px;font-size:12.3px;line-height:16px;color:#111214;transform:scaleX(1.123);font-weight:700;">97 CS</span>
<span class="t" style="left:1597.4px;top:910px;font-size:12.3px;line-height:16px;color:#111214;transform:scaleX(1.098);font-weight:700;">18 DTP</span>
<div class="b" style="left:2.4px;top:932.7px;width:1668.6px;height:41.1px;background:#f5f6f9;"></div>
<span class="t" style="left:27.6px;top:945px;font-size:12.3px;line-height:16px;color:#111214;letter-spacing:0.35px;transform:scaleX(1.130);font-weight:700;">22m</span>
<span class="t" style="left:121.5px;top:938px;font-size:12.3px;line-height:16px;color:#111214;letter-spacing:0.28px;transform:scaleX(1.130);font-weight:700;">$1,300</span>
<span class="t" style="left:108.4px;top:956px;font-size:11px;line-height:14px;color:#6a6a6a;letter-spacing:0.26px;transform:scaleX(1.150);font-weight:700;">$2.49*/mi</span>
<svg class="b" style="left:184.5px;top:942.5px;" width="18" height="18" viewBox="0 0 18 18"><path d="M0 9.7L7.3 12.2L14.3 0.6L17.6 0L7.1 17.4L0 10.9Z" fill="#0046e0"/></svg>
<span class="t" style="left:227.8px;top:945px;font-size:12.3px;line-height:16px;color:#0046e0;letter-spacing:0.17px;transform:scaleX(1.130);font-weight:700;">522</span>
<span class="t" style="left:289.5px;top:945px;font-size:12.3px;line-height:16px;color:#111214;letter-spacing:0.35px;transform:scaleX(1.130);font-weight:700;">Houston, TX</span>
<span class="t" style="left:466.6px;top:945px;font-size:12.3px;line-height:16px;color:#111214;letter-spacing:-0.05px;transform:scaleX(1.090);font-weight:700;">(241)</span>
<span class="t" style="left:537.9px;top:945px;font-size:12.3px;line-height:16px;color:#111214;letter-spacing:0.49px;transform:scaleX(1.130);font-weight:700;">Meridian, MS</span>
<span class="t" style="left:715.5px;top:945px;font-size:12.3px;line-height:16px;color:#111214;letter-spacing:0.47px;transform:scaleX(1.130);font-weight:700;">(290)</span>
<span class="t" style="left:786.8px;top:945px;font-size:12.3px;line-height:16px;color:#111214;letter-spacing:1.14px;transform:scaleX(1.130);font-weight:700;">2/20-2/20</span>
<span class="t" style="left:891.4px;top:945px;font-size:12.3px;line-height:16px;color:#111214;transform:scaleX(1.100);font-weight:700;">V</span>
<span class="t" style="left:979.0px;top:945px;font-size:12.3px;line-height:16px;color:#111214;letter-spacing:0.41px;transform:scaleX(1.130);font-weight:700;">53 ft</span>
<span class="t" style="left:1045.3px;top:945px;font-size:12.3px;line-height:16px;color:#111214;letter-spacing:0.43px;transform:scaleX(1.130);font-weight:700;">22,000 lbs</span>
<span class="t" style="left:1144.5px;top:945px;font-size:12.3px;line-height:16px;color:#111214;transform:scaleX(1.099);font-weight:700;">Full</span>
<span class="t" style="left:1243.1px;top:945px;font-size:12.3px;line-height:16px;color:#0046e0;transform:scaleX(1.121);font-weight:700;">Broker Company 13</span>
<span class="t" style="left:1420.5px;top:945px;font-size:12.3px;line-height:16px;color:#0046e0;letter-spacing:0.28px;transform:scaleX(1.130);font-weight:700;">(555) 555-5512</span>
<span class="t" style="left:1597.4px;top:936px;font-size:12.3px;line-height:16px;color:#111214;transform:scaleX(1.123);font-weight:700;">97 CS</span>
<span class="t" style="left:1597.4px;top:954px;font-size:12.3px;line-height:16px;color:#111214;letter-spacing:-0.12px;transform:scaleX(1.090);font-weight:700;">17 DTP</span>
<span class="t" style="left:27.6px;top:989px;font-size:12.3px;line-height:16px;color:#111214;letter-spacing:0.35px;transform:scaleX(1.130);font-weight:700;">22m</span>
<span class="t" style="left:122.5px;top:982px;font-size:12.3px;line-height:16px;color:#111214;letter-spacing:0.10px;transform:scaleX(1.130);font-weight:700;">$1,700</span>
<span class="t" style="left:110.9px;top:1000px;font-size:11px;line-height:14px;color:#6a6a6a;transform:scaleX(1.147);font-weight:700;">$1.95*/mi</span>
<svg class="b" style="left:184.5px;top:986.5px;" width="18" height="18" viewBox="0 0 18 18"><path d="M0 9.7L7.3 12.2L14.3 0.6L17.6 0L7.1 17.4L0 10.9Z" fill="#0046e0"/></svg>
<span class="t" style="left:227.8px;top:989px;font-size:12.3px;line-height:16px;color:#0046e0;transform:scaleX(1.120);font-weight:700;">874</span>
<span class="t" style="left:289.5px;top:989px;font-size:12.3px;line-height:16px;color:#111214;letter-spacing:0.50px;transform:scaleX(1.130);font-weight:700;">Northlake, TX</span>
<span class="t" style="left:466.6px;top:989px;font-size:12.3px;line-height:16px;color:#111214;letter-spacing:0.40px;transform:scaleX(1.130);font-weight:700;">(36)</span>
<span class="t" style="left:537.9px;top:989px;font-size:12.3px;line-height:16px;color:#111214;letter-spacing:0.42px;transform:scaleX(1.130);font-weight:700;">Knoxville, TN</span>
<span class="t" style="left:715.5px;top:989px;font-size:12.3px;line-height:16px;color:#111214;letter-spacing:-0.05px;transform:scaleX(1.090);font-weight:700;">(213)</span>
<span class="t" style="left:786.8px;top:989px;font-size:12.3px;line-height:16px;color:#111214;letter-spacing:1.14px;transform:scaleX(1.130);font-weight:700;">2/20-2/20</span>
<span class="t" style="left:891.4px;top:989px;font-size:12.3px;line-height:16px;color:#111214;transform:scaleX(1.100);font-weight:700;">V</span>
<span class="t" style="left:979.0px;top:989px;font-size:12.3px;line-height:16px;color:#111214;letter-spacing:0.41px;transform:scaleX(1.130);font-weight:700;">53 ft</span>
<span class="t" style="left:1045.3px;top:989px;font-size:12.3px;line-height:16px;color:#111214;letter-spacing:0.48px;transform:scaleX(1.130);font-weight:700;">39,600 lbs</span>
<span class="t" style="left:1144.5px;top:989px;font-size:12.3px;line-height:16px;color:#111214;transform:scaleX(1.099);font-weight:700;">Full</span>
<span class="t" style="left:1243.1px;top:989px;font-size:12.3px;line-height:16px;color:#0046e0;transform:scaleX(1.121);font-weight:700;">Broker Company 14</span>
<span class="t" style="left:1420.5px;top:989px;font-size:12.3px;line-height:16px;color:#0046e0;letter-spacing:0.28px;transform:scaleX(1.130);font-weight:700;">(555) 555-5513</span>
<span class="t" style="left:1597.4px;top:980px;font-size:12.3px;line-height:16px;color:#111214;transform:scaleX(1.117);font-weight:700;">100 CS</span>
<span class="t" style="left:1597.4px;top:998px;font-size:12.3px;line-height:16px;color:#111214;transform:scaleX(1.098);font-weight:700;">16 DTP</span>
<div class="b" style="left:2.4px;top:1020.8px;width:1668.6px;height:41.1px;background:#f5f6f9;"></div>
<span class="t" style="left:27.6px;top:1033px;font-size:12.3px;line-height:16px;color:#111214;letter-spacing:0.35px;transform:scaleX(1.130);font-weight:700;">23m</span>
<span class="t" style="left:157.7px;top:1033px;font-size:12.3px;line-height:16px;color:#111214;transform:scaleX(1.113);font-weight:700;-webkit-text-stroke:0.4px #111214;">–</span>
<svg class="b" style="left:184.5px;top:1030.6px;" width="18" height="18" viewBox="0 0 18 18"><path d="M0 9.7L7.3 12.2L14.3 0.6L17.6 0L7.1 17.4L0 10.9Z" fill="#0046e0"/></svg>
<span class="t" style="left:227.8px;top:1033px;font-size:12.3px;line-height:16px;color:#0046e0;transform:scaleX(1.118);font-weight:700;">1023</span>
<span class="t" style="left:289.5px;top:1033px;font-size:12.3px;line-height:16px;color:#111214;letter-spacing:0.35px;transform:scaleX(1.130);font-weight:700;">Houston, TX</span>
<span class="t" style="left:466.6px;top:1033px;font-size:12.3px;line-height:16px;color:#111214;letter-spacing:-0.05px;transform:scaleX(1.090);font-weight:700;">(241)</span>
<span class="t" style="left:537.9px;top:1033px;font-size:12.3px;line-height:16px;color:#111214;letter-spacing:0.47px;transform:scaleX(1.130);font-weight:700;">Kingsport, TN</span>
<span class="t" style="left:715.5px;top:1033px;font-size:12.3px;line-height:16px;color:#111214;letter-spacing:0.47px;transform:scaleX(1.130);font-weight:700;">(290)</span>
<span class="t" style="left:786.8px;top:1033px;font-size:12.3px;line-height:16px;color:#111214;letter-spacing:0.47px;transform:scaleX(1.130);font-weight:700;">2/21-2/21</span>
<span class="t" style="left:891.4px;top:1033px;font-size:12.3px;line-height:16px;color:#111214;transform:scaleX(1.100);font-weight:700;">V</span>
<span class="t" style="left:979.0px;top:1033px;font-size:12.3px;line-height:16px;color:#111214;letter-spacing:0.41px;transform:scaleX(1.130);font-weight:700;">53 ft</span>
<span class="t" style="left:1045.3px;top:1033px;font-size:12.3px;line-height:16px;color:#111214;letter-spacing:0.13px;transform:scaleX(1.130);font-weight:700;">13,500 lbs</span>
<span class="t" style="left:1144.5px;top:1033px;font-size:12.3px;line-height:16px;color:#111214;transform:scaleX(1.099);font-weight:700;">Full</span>
<span class="t" style="left:1243.1px;top:1033px;font-size:12.3px;line-height:16px;color:#0046e0;transform:scaleX(1.121);font-weight:700;">Broker Company 15</span>
<span class="t" style="left:1420.5px;top:1033px;font-size:12.3px;line-height:16px;color:#0046e0;letter-spacing:0.28px;transform:scaleX(1.130);font-weight:700;">(555) 555-5514</span>
<span class="t" style="left:1597.4px;top:1024px;font-size:12.3px;line-height:16px;color:#111214;letter-spacing:0.17px;transform:scaleX(1.130);font-weight:700;">95 CS</span>
<span class="t" style="left:1597.4px;top:1042px;font-size:12.3px;line-height:16px;color:#111214;letter-spacing:0.30px;transform:scaleX(1.130);font-weight:700;">20 DTP</span>
<span class="t" style="left:1597.4px;top:1068px;font-size:12.3px;line-height:16px;color:#111214;transform:scaleX(1.123);font-weight:700;">97 CS</span>
<div class="b" style="left:1671px;top:314px;width:17px;height:761px;background:#f1f1f1;"></div>
<svg class="b" style="left:1675.8px;top:320px;" width="8" height="5" viewBox="0 0 8 5"><path d="M3.8 0.2L7.4 4.3H0.2z" fill="#a3a3a3"/></svg>
<div class="b" style="left:1673px;top:331px;width:13px;height:79px;background:#c1c1c1;"></div>
<svg class="b" style="left:1675.8px;top:1063px;" width="8" height="5" viewBox="0 0 8 5"><path d="M0.2 0.2h7.2L3.8 4.3z" fill="#505050"/></svg>
<div class="b" style="left:845.4px;top:224px;width:25.5px;height:28px;box-sizing:border-box;border:1px solid #d3d7dd;border-radius:2px;background:#f1f2f5;"></div>
<svg class="b" style="left:852px;top:228px;" width="12" height="22" viewBox="0 0 12 22"><path d="M6 1L11 6.5H1z" fill="#cfcfd4"/><path d="M0.5 15h11L6 21z" fill="#6c6c6c"/></svg>
<div class="b" style="left:837px;top:225.7px;width:56px;height:56px;background:rgba(246,160,160,.66);border-radius:28px;"></div>
<svg class="b" style="left:848px;top:232px;" width="34" height="44" viewBox="0 0 34 44"><g fill="none" stroke="#0c4a4c" stroke-width="2.8" stroke-linejoin="miter"><path d="M17 2v13"/><path d="M11 8.6l6-6 6 6"/><path d="M17 29v13"/><path d="M11 35.6l6 6 6-6"/></g><rect x="0" y="18.9" width="34" height="2.1" fill="#0c4a4c"/><rect x="0" y="22.8" width="34" height="2.2" fill="#0c4a4c"/></svg>
</body></html>
